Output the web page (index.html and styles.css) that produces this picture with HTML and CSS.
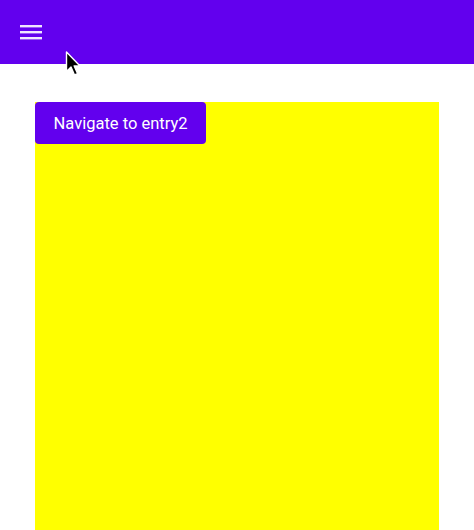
FILE: index.html
```html
<!DOCTYPE html>
<html lang="en">
<head>
  <meta charset="UTF-8">
  <meta name="viewport" content="width=device-width, initial-scale=1.0">
  <title>entry1</title>
  <link rel="stylesheet" href="styles.css">
</head>
<body>

  <!-- Top app bar -->
  <header class="app-bar">
    <button class="menu-btn" aria-label="Menu">
      <svg width="22" height="15" viewBox="0 0 22 15">
        <rect x="0" y="0" width="22" height="2.4" fill="currentColor"/>
        <rect x="0" y="6" width="22" height="2.4" fill="currentColor"/>
        <rect x="0" y="12" width="22" height="2.4" fill="currentColor"/>
      </svg>
    </button>
  </header>

  <!-- Page content -->
  <main class="content">
    <div class="entry-box">
      <button class="nav-btn">Navigate to entry2</button>
    </div>
  </main>

  <!-- Mouse pointer -->
  <svg class="cursor" width="18" height="27" viewBox="0 0 18 27">
    <path d="M1.5 1 L1.5 20.5 L6 16 L9.5 24 L12.6 22.6 L9.2 15 L15 15 Z" fill="#000" stroke="#fff" stroke-width="1.4" stroke-linejoin="round"/>
  </svg>

</body>
</html>
```

FILE: styles.css
```css
body {
  margin: 0;
  padding: 0;
  font-family: 'Roboto', 'Liberation Sans', sans-serif;
  background: #fff;
  height: 530px;
  overflow: hidden;
  display: flex;
  flex-direction: column;
}

.app-bar {
  height: 64px;
  flex-shrink: 0;
  background: #6200ee;
  display: flex;
  align-items: center;
  padding-left: 20px;
}

.menu-btn {
  background: none;
  border: none;
  padding: 0;
  margin-top: 1px;
  color: #efe4ff;
  display: flex;
  cursor: pointer;
}

.content {
  flex: 1;
  padding: 38px 35px 0 35px;
  display: flex;
}

.entry-box {
  width: 404px;
  background: #ffff00;
  display: flex;
  align-items: flex-start;
}

.nav-btn {
  height: 42px;
  width: 171px;
  padding: 0;
  background: #6200ee;
  color: #fff;
  border: none;
  border-radius: 4px;
  font-family: 'Roboto', 'Liberation Sans', sans-serif;
  font-size: 16.5px;
  cursor: pointer;
}

.cursor {
  position: absolute;
  left: 65px;
  top: 51px;
}
```
